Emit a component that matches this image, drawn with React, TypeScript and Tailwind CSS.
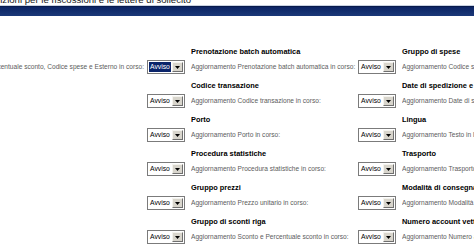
import React from 'react';

type Item = { title: string; text: string };

const colA: Item[] = [
  { title: '', text: 'Aggiornamento Gruppo di spese, Percentuale sconto, Codice spese e Esterno in corso:' },
  { title: '', text: '' },
  { title: '', text: '' },
  { title: '', text: '' },
  { title: '', text: '' },
  { title: '', text: '' },
];

const colB: Item[] = [
  { title: 'Prenotazione batch automatica', text: 'Aggiornamento Prenotazione batch automatica in corso:' },
  { title: 'Codice transazione', text: 'Aggiornamento Codice transazione in corso:' },
  { title: 'Porto', text: 'Aggiornamento Porto in corso:' },
  { title: 'Procedura statistiche', text: 'Aggiornamento Procedura statistiche in corso:' },
  { title: 'Gruppo prezzi', text: 'Aggiornamento Prezzo unitario in corso:' },
  { title: 'Gruppo di sconti riga', text: 'Aggiornamento Sconto e Percentuale sconto in corso:' },
];

const colC: Item[] = [
  { title: 'Gruppo di spese', text: 'Aggiornamento Codice spese in corso:' },
  { title: 'Date di spedizione e consegna', text: 'Aggiornamento Date di spedizione e consegna in corso:' },
  { title: 'Lingua', text: 'Aggiornamento Testo in lingua in corso:' },
  { title: 'Trasporto', text: 'Aggiornamento Trasporto in corso:' },
  { title: 'Modalità di consegna', text: 'Aggiornamento Modalità di consegna in corso:' },
  { title: 'Numero account vettore', text: 'Aggiornamento Numero account vettore in corso:' },
];

// Old-style windows combo box
const Combo = ({ selected }: { selected?: boolean }) => (
  <div className="flex h-[14px] w-[38px] shrink-0 items-stretch border border-[#7b7b7b] bg-white p-px">
    <div className="flex flex-1 items-center">
      <span
        className={
          selected
            ? 'bg-[#0a246a] pr-px pl-px text-[6.8px] leading-[10px] text-white'
            : 'pl-px text-[6.8px] leading-[10px] text-black'
        }
      >
        Avviso
      </span>
    </div>
    <div className="flex w-[11px] items-center justify-center border border-t-[#f4f3ee] border-l-[#f4f3ee] border-r-[#6f6f6f] border-b-[#6f6f6f] bg-[#d8d5cc]">
      <svg width="5" height="3" viewBox="0 0 5 3">
        <path d="M0 0h5L2.5 3z" fill="#000" />
      </svg>
    </div>
  </div>
);

const Column = ({ items, right, combo, first }: { items: Item[]; right?: boolean; combo?: boolean; first?: boolean }) => (
  <div className="flex w-[211px] shrink-0 flex-col">
    {items.map((it, i) => (
      <div key={i} className="flex h-[34px] flex-col">
        <div className="flex h-[14px] items-center whitespace-nowrap text-[7.4px] font-bold text-black">
          {it.title}
        </div>
        <div className="flex h-[16px] items-center">
          <div
            className={`flex w-[167px] shrink-0 overflow-hidden whitespace-nowrap pr-[3px] text-[6.6px] text-[#5c5c5c] ${right ? 'justify-end' : ''}`}
          >
            {it.text}
          </div>
          {combo && <Combo selected={first && i === 0} />}
        </div>
      </div>
    ))}
  </div>
);

export default function App() {
  return (
    <div className="h-[248px] w-[474px] overflow-hidden bg-white" style={{ fontFamily: '"Liberation Sans", Arial, sans-serif' }}>
      <div className="h-[5px] overflow-hidden">
        <p className="-mt-[6px] -ml-[3px] whitespace-nowrap text-[9.6px] leading-[11px] text-[#222]">
          nzioni per le riscossioni e le lettere di sollecito
        </p>
      </div>
      <div className="h-px bg-[#c9d2e2]" />
      <div className="h-[10px] border-t border-[#071a4c] bg-gradient-to-b from-[#0c2464] to-[#1b3878]" />
      <div className="-ml-[20px] flex pt-[29px]">
        <Column items={colA} right combo first />
        <Column items={colB} combo />
        <Column items={colC} />
      </div>
    </div>
  );
}
